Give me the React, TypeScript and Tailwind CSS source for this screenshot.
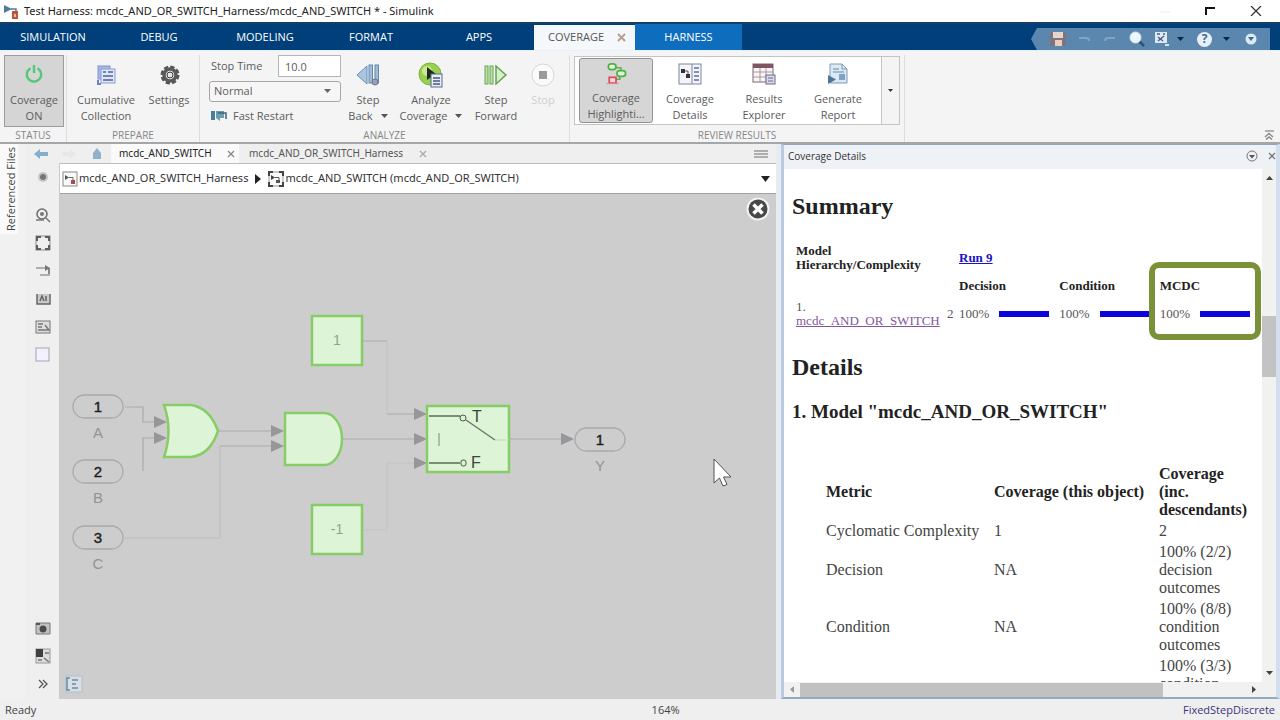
import type { ReactNode } from "react";

type Kids = { children?: ReactNode };

function Svg({ w, h, className, children }: { w: number; h: number; className?: string } & Kids) {
  return (
    <svg width={w} height={h} viewBox={`0 0 ${w} ${h}`} className={className} fill="none" aria-hidden="true">
      {children}
    </svg>
  );
}

function Caret() {
  return (
    <Svg w={7} h={4} className="inline-block shrink-0">
      <path d="M0 0H7L3.5 4Z" fill="#555" />
    </Svg>
  );
}

/* ---------- ribbon icons, all on a 26px grid ---------- */

const PowerIcon = () => (
  <Svg w={26} h={26}>
    <path d="M9.500 6.200A7.200 7.200 0 1 0 16.500 6.200" stroke="#55c878" strokeWidth="2.400" />
    <path d="M13 3V11" stroke="#55c878" strokeWidth="2.400" />
  </Svg>
);
const CumulativeIcon = () => (
  <Svg w={26} h={26}>
    <rect x="5" y="4" width="12" height="13" fill="#a9b9e6" stroke="#7f93cf" />
    <rect x="8" y="7" width="14" height="14" fill="#dfe6f8" stroke="#8b9bcf" />
    <path d="M10 10H13M15 10H20M10 14H20M10 18H20" stroke="#4f62a0" strokeWidth="1.500" />
    <path d="M5 18V22H8" stroke="#6b83c7" strokeWidth="2" />
  </Svg>
);
const GearIcon = () => (
  <Svg w={26} h={26}>
    <circle cx="14" cy="13" r="8" stroke="#555" strokeWidth="3" strokeDasharray="4.200 2.083" />
    <circle cx="14" cy="13" r="6" stroke="#5a5a5a" strokeWidth="3.500" />
    <circle cx="14" cy="13" r="3" fill="#e6e6e6" stroke="#333" />
  </Svg>
);
const StepBackIcon = () => (
  <Svg w={26} h={26}>
    <path d="M2 13L12 4V22Z" fill="#a8c6e0" stroke="#6a8fb5" />
    <rect x="14" y="3" width="3.500" height="18" fill="#9fbcda" stroke="#6787ab" />
    <rect x="20" y="3" width="3.500" height="18" fill="#9fbcda" stroke="#6787ab" />
    <circle cx="20" cy="20" r="3" fill="#9aa3b5" stroke="#69748c" />
  </Svg>
);
const AnalyzeIcon = () => (
  <Svg w={26} h={26}>
    <circle cx="12" cy="12" r="11" fill="#9ad04f" stroke="#7ab33a" />
    <circle cx="9" cy="9" r="5" fill="#c8ea93" />
    <path d="M9 5V18L18 12Z" fill="#1e2a1e" />
    <rect x="13" y="12" width="11" height="13" fill="#e9eef6" stroke="#566a8a" />
    <path d="M15 16H22M15 19H22M15 22H22" stroke="#445a80" strokeWidth="1.500" />
  </Svg>
);
const StepForwardIcon = () => (
  <Svg w={26} h={26}>
    <rect x="2" y="4" width="3" height="18" fill="#b9e3a4" stroke="#6aa553" />
    <rect x="7" y="4" width="3" height="18" fill="#b9e3a4" stroke="#6aa553" />
    <path d="M13 4V22L23 13Z" fill="#d5efc8" stroke="#5f9f49" strokeWidth="1.400" />
  </Svg>
);
const StopIcon = () => (
  <Svg w={26} h={26}>
    <circle cx="13" cy="13" r="11" fill="#fafafa" stroke="#d6d6d6" />
    <rect x="9" y="9" width="8" height="8" fill="#9b9b9b" />
  </Svg>
);
const HighlightIcon = () => (
  <Svg w={26} h={26}>
    <path d="M10 7H18V12M10 19H17V16" stroke="#5fae50" strokeWidth="1.500" />
    <rect x="5" y="3" width="8" height="6" rx="3" fill="#dff5d6" stroke="#4fb043" strokeWidth="1.800" />
    <rect x="14" y="10" width="9" height="6" rx="3" fill="#dff5d6" stroke="#4fb043" strokeWidth="1.800" />
    <rect x="6" y="17" width="7" height="6" fill="#fbdcdc" stroke="#dc4a55" strokeWidth="1.800" />
    <path d="M3 23.500H16" stroke="#e08a90" />
  </Svg>
);
const DetailsIcon = () => (
  <Svg w={26} h={26}>
    <rect x="2" y="3" width="22" height="20" fill="#f3f5fa" stroke="#7a85a0" />
    <path d="M15 3V23" stroke="#7a85a0" />
    <path d="M17 7H22M17 11H22M17 15H22M17 19H22" stroke="#5a6fa8" strokeWidth="1.500" />
    <rect x="4" y="8" width="4" height="4" fill="#333" />
    <rect x="9" y="13" width="4" height="4" fill="#333" />
    <path d="M8 10H11V13" stroke="#555" />
  </Svg>
);
const ResultsIcon = () => (
  <Svg w={26} h={26}>
    <rect x="2" y="3" width="20" height="18" fill="#f8f5f6" stroke="#7c6670" />
    <rect x="2" y="3" width="20" height="4" fill="#7d5565" />
    <path d="M2 11H22M2 16H22M9 7V21M15 7V21" stroke="#a898a2" />
    <rect x="15" y="14" width="9" height="9" fill="#d7d9e8" stroke="#686c8c" />
    <path d="M17 17H22M17 20H22" stroke="#686c8c" />
  </Svg>
);
const ReportIcon = () => (
  <Svg w={26} h={26}>
    <path d="M5 3H17L22 8V22H5Z" fill="#dce8f3" stroke="#7f9bb8" />
    <path d="M17 3V8H22" stroke="#7f9bb8" />
    <path d="M8 8H14M8 11H19" stroke="#8aa7c4" strokeWidth="1.500" />
    <rect x="14" y="13" width="6" height="6" fill="#7fa3c7" />
    <path d="M3 14L11 18.500L3 23Z" fill="#4d7595" />
  </Svg>
);

/* ---------- ribbon building blocks ---------- */

function Tool({ icon, lines, width, className = "", caret = false, ...rest }: {
  icon: ReactNode; lines: string[]; width: string; className?: string; caret?: boolean; disabled?: boolean; "aria-pressed"?: boolean;
}) {
  return (
    <button type="button" className={`flex flex-col items-center text-[11px] leading-4 whitespace-nowrap ${width} ${className}`} {...rest}>
      {icon}
      {lines.map((line, i) => (
        <span key={line} className={i === 0 ? "mt-1 block" : "flex items-center gap-2"}>
          {line}
          {caret && i === lines.length - 1 && <Caret />}
        </span>
      ))}
    </button>
  );
}

function Group({ label, className, children }: { label: string; className: string } & Kids) {
  return (
    <section aria-label={label} className={`flex shrink-0 flex-col border-r border-[#dedede] ${className}`}>
      <div className="flex flex-1 items-start">{children}</div>
      <div className="h-[14px] text-center text-[10px] leading-[14px] text-[#868686]">{label}</div>
    </section>
  );
}

function TitleBar() {
  return (
    <header className="flex h-[22px] shrink-0 items-center bg-white pr-[18px] font-['Noto_Sans',sans-serif] text-[11px] text-[#222]">
      <Svg w={20} h={18} className="mr-[2px] ml-[2px]">
        <path d="M2 3L10 7L2 11Z" fill="#4c7d9b" />
        <path d="M9 7H14V10" stroke="#557b91" strokeWidth="1.500" />
        <rect x="10" y="9" width="6" height="8" fill="#b9563d" />
        <rect x="12" y="12" width="2" height="3" fill="#e8b9a9" />
      </Svg>
      <h1 className="mr-auto whitespace-nowrap">Test Harness: mcdc_AND_OR_SWITCH_Harness/mcdc_AND_SWITCH * - Simulink</h1>
      <div className="flex items-center gap-[34px]">
        <button type="button" aria-label="Minimize">
          <Svg w={10} h={10}><path d="M0 6H10" stroke="#eeeeee" /></Svg>
        </button>
        <button type="button" aria-label="Restore">
          <Svg w={12} h={10}><path d="M2 9V2H11" stroke="#111" strokeWidth="2" /></Svg>
        </button>
        <button type="button" aria-label="Close">
          <Svg w={12} h={10}><path d="M1 0L11 10M11 0L1 10" stroke="#333" strokeWidth="1.300" /></Svg>
        </button>
      </div>
    </header>
  );
}

function QuickAccess() {
  return (
    <div className="mr-[10px] ml-auto flex h-[22px] items-center">
      <Svg w={6} h={22}><path d="M6 0L0 11L6 22Z" fill="#5b86ae" /></Svg>
      <div className="flex h-[22px] items-center bg-[#5b86ae] pr-[13px] pl-[12px]">
        <button type="button" aria-label="Save">
          <Svg w={18} h={16}>
            <rect x="1" y="1" width="16" height="14" rx="1" fill="#7d7480" />
            <rect x="4" y="1" width="10" height="6" fill="#e3d6cf" />
            <rect x="6" y="9" width="7" height="6" fill="#e9cdbd" />
          </Svg>
        </button>
        <button type="button" aria-label="Undo" className="ml-[10px]">
          <Svg w={14} h={14}><path d="M2 6H9Q12 6 12 9" stroke="#84a4c4" strokeWidth="2" /></Svg>
        </button>
        <button type="button" aria-label="Redo" className="ml-3">
          <Svg w={14} h={14}><path d="M12 6H5Q2 6 2 9" stroke="#84a4c4" strokeWidth="2" /></Svg>
        </button>
        <button type="button" aria-label="Search" className="ml-3">
          <Svg w={16} h={16}>
            <path d="M9 9L15 15" stroke="#2b517b" strokeWidth="2.500" />
            <circle cx="6.500" cy="6.500" r="5.500" fill="#eef6fd" stroke="#d4e4f2" />
          </Svg>
        </button>
        <button type="button" aria-label="Favorites" className="ml-[9px]">
          <Svg w={16} h={16}>
            <rect x="1" y="1" width="12" height="11" fill="#dfe8f2" />
            <path d="M3 3H6M9 3H11M4 6L9 10M10 5L4 10" stroke="#48668b" strokeWidth="1.500" />
            <path d="M11 14H15" stroke="#d6e0ea" strokeWidth="2" />
          </Svg>
        </button>
        <button type="button" aria-label="More favorites" className="ml-[7px]">
          <Svg w={7} h={4}><path d="M0 0H7L3.500 4Z" fill="#082745" /></Svg>
        </button>
        <button type="button" aria-label="Help" className="ml-[13px] flex size-[15px] items-center justify-center rounded-full bg-[#e6f0f6] text-[12px] leading-none font-bold text-[#3e6d92]">?</button>
        <button type="button" aria-label="More help" className="ml-[11px]">
          <Svg w={7} h={4}><path d="M0 0H7L3.500 4Z" fill="#082745" /></Svg>
        </button>
        <button type="button" aria-label="Minimize toolstrip" className="ml-[15px]">
          <Svg w={12} h={12}>
            <circle cx="6" cy="6" r="5.500" fill="#dceaf4" />
            <path d="M3 4H9L6 8Z" fill="#386a93" />
          </Svg>
        </button>
      </div>
    </div>
  );
}

function TabBar() {
  const tab = "flex h-full shrink-0 items-center justify-center";
  return (
    <nav aria-label="Toolstrip tabs" className="flex h-[28px] shrink-0 items-end border-t-2 border-[#173f63] bg-[#003f7a] text-[11px] text-white">
      <a href="#simulation" className={`w-[106px] ${tab}`}>SIMULATION</a>
      <a href="#debug" className={`w-[106px] ${tab}`}>DEBUG</a>
      <a href="#modeling" className={`w-[106px] ${tab}`}>MODELING</a>
      <a href="#format" className={`w-[106px] ${tab}`}>FORMAT</a>
      <a href="#apps" className={`w-[110px] ${tab}`}>APPS</a>
      <div className="flex h-[25px] w-[101px] shrink-0 items-center bg-[#f5f8fa] pl-[14px] text-[#555]">
        <a href="#coverage" aria-current="page">COVERAGE</a>
        <button type="button" aria-label="Close Coverage tab" className="ml-auto mr-[9px]">
          <Svg w={9} h={9}><path d="M1 1L8 8M8 1L1 8" stroke="#b89b90" strokeWidth="1.800" /></Svg>
        </button>
      </div>
      <a href="#harness" className={`w-[107px] bg-[#0f6dbe] ${tab}`}>HARNESS</a>
      <QuickAccess />
    </nav>
  );
}

function Ribbon() {
  return (
    <div className="flex h-[94px] shrink-0 border-t border-b-2 border-t-[#e0f3fc] border-b-[#a4a7aa] bg-[#f4f4f4] pt-1 text-[#5c5c5c]">
      <Group label="STATUS" className="w-[67px]">
        <Tool icon={<PowerIcon />} lines={["Coverage", "ON"]} width="w-[60px]" aria-pressed={true}
          className="ml-1 h-[72px] border border-[#9d9d9d] bg-[#d5d5d5] pt-[6px]" />
      </Group>
      <Group label="PREPARE" className="w-[133px]">
        <Tool icon={<CumulativeIcon />} lines={["Cumulative", "Collection"]} width="w-[78px]" className="pt-[7px]" />
        <Tool icon={<GearIcon />} lines={["Settings"]} width="w-[48px]" className="pt-[7px]" />
      </Group>
      <Group label="ANALYZE" className="w-[370px]">
        <div className="ml-[9px] w-[132px] text-[11px]">
          <div className="flex h-[22px] items-center justify-between">
            <label htmlFor="stop-time" className="ml-[2px] whitespace-nowrap">Stop Time</label>
            <input id="stop-time" defaultValue="10.0" className="h-[22px] w-[63px] border border-[#b5b5b5] bg-white px-[6px]" />
          </div>
          <div className="relative mt-[4px]">
            <select aria-label="Simulation mode" className="h-[21px] w-full appearance-none rounded-[3px] border border-[#a6a6a6] bg-[#f6f6f6] pl-1">
              <option>Normal</option>
            </select>
            <Svg w={7} h={4} className="pointer-events-none absolute top-[8px] right-[10px]"><path d="M0 0H7L3.500 4Z" fill="#666" /></Svg>
          </div>
          <button type="button" className="mt-[6px] flex h-4 items-center gap-[6px] whitespace-nowrap">
            <Svg w={16} h={12} className="ml-[2px]">
              <rect x="0" y="1" width="4" height="9" fill="#4a7f95" />
              <path d="M5 1H13V8H9V11L5 8Z" fill="#6c9cad" />
              <path d="M7 3H15V9" stroke="#38677c" strokeWidth="1.500" />
            </Svg>
            Fast Restart
          </button>
        </div>
        <Tool icon={<StepBackIcon />} lines={["Step", "Back"]} width="w-[54px]" caret className="pt-[7px]" />
        <Tool icon={<AnalyzeIcon />} lines={["Analyze", "Coverage"]} width="w-[72px]" caret className="pt-[7px]" />
        <Tool icon={<StepForwardIcon />} lines={["Step", "Forward"]} width="w-[58px]" className="pt-[7px]" />
        <Tool icon={<StopIcon />} lines={["Stop"]} width="w-[36px]" disabled className="pt-[7px] text-[#cfcfcf]" />
      </Group>
      <Group label="REVIEW RESULTS" className="w-[335px]">
        <div className="mt-px ml-1 flex h-[69px] border border-[#c4c4c4] bg-white">
          <Tool icon={<HighlightIcon />} lines={["Coverage", "Highlighti..."]} width="w-[74px]" aria-pressed={true}
            className="mt-px ml-1 h-[65px] rounded-[3px] border border-[#929292] bg-[#d6d6d6] pt-[2px]" />
          <Tool icon={<DetailsIcon />} lines={["Coverage", "Details"]} width="w-[74px]" className="pt-1" />
          <Tool icon={<ResultsIcon />} lines={["Results", "Explorer"]} width="w-[74px]" className="pt-1" />
          <Tool icon={<ReportIcon />} lines={["Generate", "Report"]} width="w-[74px]" className="pt-1" />
          <button type="button" aria-label="Show more" className="ml-[6px] flex w-[18px] items-center justify-center border-l border-[#c4c4c4] bg-[#f4f4f4]">
            <Svg w={5} h={3}><path d="M0 0H5L2.500 3Z" fill="#333" /></Svg>
          </button>
        </div>
      </Group>
      <button type="button" aria-label="Collapse toolstrip" className="mt-auto mr-[5px] mb-[2px] ml-auto">
        <Svg w={12} h={10}>
          <path d="M2 1H11" stroke="#999" strokeWidth="1.500" />
          <path d="M2 7L6 3.500L10 7M3 9.500L6 7L9 9.500" stroke="#888" strokeWidth="1.500" />
        </Svg>
      </button>
    </div>
  );
}

/* ---------- palette ---------- */

const paletteTop: { name: string; art: ReactNode }[] = [
  { name: "Zoom in", art: <><circle cx="7" cy="7" r="5" stroke="#6b6b6b" strokeWidth="1.500" /><circle cx="7" cy="7" r="2" fill="#777" /><path d="M11 11L15 15M1 13H9" stroke="#777" strokeWidth="1.500" /></> },
  { name: "Fit to view", art: <><rect x="1" y="1" width="14" height="14" stroke="#8a8a8a" /><path d="M2 6V2H6M10 2H14V6M14 10V14H10M6 14H2V10" stroke="#5e5e5e" strokeWidth="2" /></> },
  { name: "Signal names", art: <><path d="M1 5H11M5 12H15" stroke="#9a9a9a" strokeWidth="1.500" /><path d="M10 2L15 5L10 8Z" fill="#777" /><path d="M14 5V11" stroke="#666" strokeWidth="1.500" /></> },
  { name: "Annotation", art: <><path d="M2 3H14V13H2Z" fill="#c9c9c9" /><path d="M2 3V13H15V3M5 10L7 5L9 10M11 5V10" stroke="#666" strokeWidth="1.500" /></> },
  { name: "Image", art: <><rect x="1" y="2" width="14" height="12" fill="#dedede" stroke="#777" /><path d="M3 5H8M3 8H7M3 11H14L10 6" stroke="#777" strokeWidth="1.500" /></> },
  { name: "Area", art: <rect x="1" y="1" width="13" height="13" fill="#f2f2fc" stroke="#a4a3b8" /> },
];

function Palette() {
  return (
    <div className="flex w-[33px] shrink-0 flex-col items-center bg-[#efefef] pt-[6px] pb-[7px]">
      <button type="button" aria-label="Hide browser" className="mb-[22px]">
        <Svg w={16} h={16}><circle cx="8" cy="8" r="5" fill="#c6c6c6" /><circle cx="8" cy="8" r="3" fill="#777" /></Svg>
      </button>
      <div className="flex flex-col gap-3">
        {paletteTop.map((p) => (
          <button type="button" key={p.name} aria-label={p.name}><Svg w={16} h={16}>{p.art}</Svg></button>
        ))}
      </div>
      <div className="mt-auto flex flex-col gap-3">
        <button type="button" aria-label="Screenshot">
          <Svg w={16} h={16}>
            <path d="M1 3H15V14H1Z" fill="#c2c2c2" stroke="#777" /><circle cx="8" cy="9" r="3.500" fill="#4c4c4c" /><path d="M1 4H5" stroke="#555" strokeWidth="2" />
          </Svg>
        </button>
        <button type="button" aria-label="Model data">
          <Svg w={16} h={16}>
            <rect x="1" y="1" width="14" height="14" fill="#dcdcdc" stroke="#999" /><rect x="1" y="1" width="7" height="8" fill="#3f3f3f" /><path d="M10 5H14M3 12H7M9 10L14 14" stroke="#777" strokeWidth="1.500" />
          </Svg>
        </button>
        <button type="button" aria-label="More tools">
          <Svg w={16} h={16}><path d="M4 4L8 8L4 12M8 4L12 8L8 12" stroke="#555" strokeWidth="1.300" /></Svg>
        </button>
      </div>
    </div>
  );
}

/* ---------- block diagram ---------- */

function Port({ x, y, n, name }: { x: number; y: number; n: string; name: string }) {
  return (
    <g>
      <rect x={x} y={y} width="50" height="23" rx="11.500" stroke="#a9a9a9" strokeWidth="1.300" />
      <text x={x + 25} y={y + 17} textAnchor="middle" fontSize="15" fill="#1c1c1c" stroke="#1c1c1c" strokeWidth="0.400">{n}</text>
      <text x={x + 25} y={y + 43} textAnchor="middle" fontSize="15" fill="#939393">{name}</text>
    </g>
  );
}

const ARROWS = [[167, 422], [167, 438], [284, 431], [284, 446], [427, 414], [427, 439], [427, 463], [574, 439]];

function Diagram() {
  return (
    <svg width="715" height="504" viewBox="60 194 715 504" fill="none" role="img" aria-label="mcdc_AND_SWITCH block diagram" className="shrink-0" fontFamily="'Liberation Sans', Arial, sans-serif">
      <g stroke="#abaaad" strokeWidth="1.200">
        <path d="M125 407H143V422H158M143 471V438H158M219 431H274M220 446H274M343 439H416M362 341H387" />
        <path d="M387 414H416M510 439H564" />
        <path d="M125 538H220V446" stroke="#bebec1" />
        <path d="M387 341V414M362 530H387V463H416" stroke="#c4c4c7" />
      </g>
      {ARROWS.map(([x, y]) => (
        <path key={`${x}-${y}`} d={`M${x - 13} ${y - 6}L${x} ${y}L${x - 13} ${y + 6}Z`} fill="#98969a" />
      ))}
      <g fill="#def4d6" stroke="#86cd68" strokeWidth="2.500">
        <path d="M164 405H191Q210 408 218 431Q210 455 191 457H164Q173 431 164 405Z" />
        <path d="M285 413H324A18 26 0 0 1 324 465H285Z" />
        <rect x="312" y="316" width="50" height="49" />
        <rect x="312" y="505" width="50" height="49" />
        <rect x="427" y="406" width="82" height="66" />
      </g>
      <text x="337" y="345" textAnchor="middle" fontSize="14" fill="#8fa58b">1</text>
      <text x="337" y="534" textAnchor="middle" fontSize="14" fill="#8fa58b">-1</text>
      <path d="M429 416H460M429 463H460" stroke="#5c6b57" strokeWidth="1.500" />
      <circle cx="463" cy="418" r="3" stroke="#4d5a49" />
      <rect x="461" y="460" width="5" height="6" rx="2" stroke="#4d5a49" />
      <path d="M466 420L495 440" stroke="#66745f" strokeWidth="1.300" />
      <path d="M439 433V446" stroke="#93a08f" strokeWidth="1.300" />
      <path d="M495 440H509" stroke="#c4d8bd" />
      <text x="472" y="422" fontSize="16" fill="#3d463a">T</text>
      <text x="471" y="468" fontSize="16" fill="#3d463a">F</text>
      <Port x={73} y={395} n="1" name="A" />
      <Port x={73} y={460} n="2" name="B" />
      <Port x={73} y={526} n="3" name="C" />
      <Port x={575} y={428} n="1" name="Y" />
      <path d="M714 459V483L719.500 478L723 486L727 484.500L723.500 477H731Z" fill="#fff" stroke="#555" />
    </svg>
  );
}

function ModelIcon() {
  return (
    <Svg w={16} h={16} className="shrink-0">
      <rect x="1" y="1" width="14" height="14" fill="#fafafa" stroke="#888" />
      <path d="M3 4L7 6.500L3 9Z" fill="#555" />
      <path d="M7 6.500H11V9" stroke="#666" />
      <rect x="9" y="9" width="4" height="4" fill="#a44e4e" />
    </Svg>
  );
}

function ReferenceIcon() {
  return (
    <Svg w={16} h={16} className="shrink-0">
      <rect x="1" y="1" width="14" height="14" fill="#fafafa" stroke="#999" />
      <path d="M1 5V1H5M11 1H15V5M15 11V15H11M5 15H1V11" stroke="#444" strokeWidth="2" />
      <path d="M3 4L7 6.500L3 9Z" fill="#444" />
      <path d="M7 6.500H11V9" stroke="#555" />
      <rect x="8" y="9" width="4" height="3" fill="#555" />
    </Svg>
  );
}

const CloseX = ({ color }: { color: string }) => (
  <Svg w={8} h={8}><path d="M1 1L7 7M7 1L1 7" stroke={color} strokeWidth="1.300" /></Svg>
);

function Editor() {
  return (
    <main className="flex min-w-0 flex-1 flex-col font-['Noto_Sans',sans-serif]">
      <div className="flex h-[19px] shrink-0 items-center bg-[#efefef] text-[10px] text-[#555]">
        <button type="button" aria-label="Back" className="ml-2">
          <Svg w={14} h={12}><path d="M0 6L6 1V4H14V8H6V11Z" fill="#85aecb" /></Svg>
        </button>
        <button type="button" aria-label="Forward" disabled className="ml-[14px]">
          <Svg w={14} h={12}><path d="M14 6L8 1V4H0V8H8V11Z" fill="#e8e6e6" /></Svg>
        </button>
        <button type="button" aria-label="Up to parent" className="ml-[15px]">
          <Svg w={12} h={14}><path d="M6 1L10 6V12H2V6Z" fill="#8fb2c9" /></Svg>
        </button>
        <div className="ml-[8px] flex h-full w-[128px] items-center bg-[#fafafa] pl-[8px] text-[#222]">
          <a href="#mcdc-and-switch" className="whitespace-nowrap">mcdc_AND_SWITCH</a>
          <button type="button" aria-label="Close mcdc_AND_SWITCH" className="mr-1 ml-auto"><CloseX color="#888" /></button>
        </div>
        <div className="ml-[10px] flex w-[180px] items-center">
          <a href="#harness-model" className="whitespace-nowrap">mcdc_AND_OR_SWITCH_Harness</a>
          <button type="button" aria-label="Close mcdc_AND_OR_SWITCH_Harness" className="mr-[2px] ml-auto"><CloseX color="#aaa" /></button>
        </div>
        <button type="button" aria-label="Tab list" className="mr-2 ml-auto">
          <Svg w={14} h={8}><path d="M0 1H14M0 4H14M0 7H14" stroke="#999" strokeWidth="1.500" /></Svg>
        </button>
      </div>
      <div className="flex min-h-0 flex-1">
        <Palette />
        <div className="flex min-w-0 flex-1 flex-col border-l border-[#c9c9c9]">
          <div className="flex h-[31px] shrink-0 items-center border-t border-b border-t-[#bdbdbd] border-b-[#a3a3a3] bg-white pr-[6px] pl-[2px] text-[11px] whitespace-nowrap text-[#333]">
            <ModelIcon />
            <a href="#harness-model" className="ml-px">mcdc_AND_OR_SWITCH_Harness</a>
            <Svg w={6} h={10} className="mx-[7px] shrink-0"><path d="M0 0L6 5L0 10Z" fill="#222" /></Svg>
            <ReferenceIcon />
            <a href="#mcdc-and-switch" className="ml-px">mcdc_AND_SWITCH (mcdc_AND_OR_SWITCH)</a>
            <button type="button" aria-label="Browse path" className="ml-auto">
              <Svg w={9} h={6}><path d="M0 0H9L4.500 6Z" fill="#222" /></Svg>
            </button>
          </div>
          <div className="relative flex min-h-0 flex-1 overflow-hidden bg-[#cdcdcd]">
            <Diagram />
            <button type="button" aria-label="Exit coverage highlighting" className="absolute top-[3px] right-[6px]">
              <Svg w={24} h={24}>
                <circle cx="12" cy="12" r="11.500" fill="#f2f2f2" />
                <circle cx="12" cy="12" r="9.500" fill="#484848" />
                <path d="M7.500 7.500L16.500 16.500M16.500 7.500L7.500 16.500" stroke="#fff" strokeWidth="3.500" />
              </Svg>
            </button>
            <button type="button" aria-label="Show legend" className="absolute bottom-[6px] left-[5px]">
              <Svg w={18} h={18}>
                <rect x="1" y="1" width="16" height="16" fill="#d8dee4" stroke="#b4bec9" />
                <path d="M5 3H2V15H5M7 5H13M7 9H11M7 13H13" stroke="#628ea8" strokeWidth="1.500" />
              </Svg>
            </button>
          </div>
        </div>
      </div>
    </main>
  );
}

/* ---------- coverage details ---------- */

const details = [
  { metric: "Cyclomatic Complexity", own: "1", all: "2" },
  { metric: "Decision", own: "NA", all: "100% (2/2) decision outcomes" },
  { metric: "Condition", own: "NA", all: "100% (8/8) condition outcomes" },
  { metric: "", own: "", all: "100% (3/3) condition" },
];

const Full = () => (
  <td className="align-middle">
    <div className="flex items-center justify-between pr-[10px]">
      100%
      <span className="h-[6px] w-[50px] bg-[#0a05dc]" />
    </div>
  </td>
);

function Report() {
  return (
    <article className="relative min-w-0 flex-1 overflow-hidden bg-white pl-2 font-['Liberation_Serif','Times_New_Roman',serif] text-[#222]">
      <h2 className="mt-[22px] text-[24px] leading-[30px] font-bold">Summary</h2>
      <table className="mt-[23px] ml-1 w-[464px] table-fixed text-left text-[13px] leading-[14px]">
        <colgroup>
          <col className="w-[151px]" />
          <col className="w-[12px]" />
          <col />
          <col />
          <col />
        </colgroup>
        <thead>
          <tr className="h-[28px]">
            <th className="font-bold">Model Hierarchy/Complexity</th>
            <th />
            <th colSpan={3} className="font-bold"><a href="#run-9" className="text-[#1a12c8] underline">Run 9</a></th>
          </tr>
          <tr className="h-[28px]">
            <th />
            <th />
            <th className="font-bold">Decision</th>
            <th className="font-bold">Condition</th>
            <th className="font-bold">MCDC</th>
          </tr>
        </thead>
        <tbody className="text-[#555]">
          <tr className="h-[28px]">
            <td className="whitespace-nowrap">1.<br /><a href="#model-1" className="text-[#81569f] underline">mcdc_AND_OR_SWITCH</a></td>
            <td>2</td>
            <Full />
            <Full />
            <Full />
          </tr>
        </tbody>
      </table>
      <div className="pointer-events-none absolute top-[93px] right-px h-[78px] w-[112px] rounded-[10px] border-[6px] border-[#7b9138]" />
      <h2 className="mt-[24px] text-[24px] leading-[30px] font-bold">Details</h2>
      <h3 className="mt-[19px] text-[19px] leading-[22px] font-bold whitespace-nowrap">1. Model "mcdc_AND_OR_SWITCH"</h3>
      <table className="mt-[40px] ml-[34px] w-[428px] table-fixed text-left text-[16px] leading-[18px]">
        <colgroup>
          <col className="w-[168px]" />
          <col className="w-[165px]" />
          <col />
        </colgroup>
        <thead>
          <tr>
            <th className="pt-[2px] pb-px">Metric</th>
            <th className="pt-[2px] pb-px whitespace-nowrap">Coverage (this object)</th>
            <th className="pt-[2px] pb-px">Coverage (inc. descendants)</th>
          </tr>
        </thead>
        <tbody className="text-[#444]">
          {details.map((d) => (
            <tr key={d.all}>
              <td className="pt-[2px] pb-px whitespace-nowrap">{d.metric}</td>
              <td className="pt-[2px] pb-px">{d.own}</td>
              <td className="pt-[2px] pb-px">{d.all}</td>
            </tr>
          ))}
        </tbody>
      </table>
    </article>
  );
}

function CoveragePanel() {
  return (
    <aside className="flex w-[499px] shrink-0 flex-col border-t border-r-4 border-b-2 border-l-[3px] border-t-[#93a6bd] border-r-[#d3dfee] border-b-[#93a9c4] border-l-[#b9cbe2]">
      <div className="flex h-[24px] shrink-0 items-center bg-[#eef1f5] pb-[2px] pl-1 text-[10px] text-[#333]">
        <h2 className="mr-auto">Coverage Details</h2>
        <button type="button" aria-label="Panel options" className="mr-[10px]">
          <Svg w={12} h={12}><circle cx="6" cy="6" r="5" stroke="#777" /><path d="M3 5H9L6 8.500Z" fill="#555" /></Svg>
        </button>
        <button type="button" aria-label="Close panel"><Svg w={8} h={8}><path d="M1 1L7 7M7 1L1 7" stroke="#777" strokeWidth="1.300" /></Svg></button>
      </div>
      <div className="flex min-h-0 flex-1">
        <Report />
        <div className="flex w-[14px] shrink-0 flex-col items-center bg-[#f1f1ef] py-[7px]">
          <Svg w={7} h={4}><path d="M0 4H7L3.500 0Z" fill="#444" /></Svg>
          <div className="mt-[136px] h-[61px] w-full bg-[#c3c3c3]" />
          <Svg w={7} h={4} className="mt-auto"><path d="M0 0H7L3.500 4Z" fill="#444" /></Svg>
        </div>
      </div>
      <div className="flex h-[15px] shrink-0 items-center bg-[#f1f1f1] pr-[20px] pl-[6px]">
        <Svg w={4} h={7}><path d="M4 0V7L0 3.500Z" fill="#999" /></Svg>
        <div className="ml-[6px] h-[14px] w-[363px] bg-[#c1c1c1]" />
        <Svg w={4} h={7} className="ml-auto"><path d="M0 0V7L4 3.500Z" fill="#444" /></Svg>
      </div>
    </aside>
  );
}

export default function App() {
  return (
    <div className="flex h-screen flex-col overflow-hidden bg-[#efefef] font-['Open_Sans','Noto_Sans',sans-serif]">
      <TitleBar />
      <TabBar />
      <Ribbon />
      <div className="flex min-h-0 flex-1">
        <div className="w-[26px] shrink-0 bg-[#f1f1f1]">
          <button type="button" className="flex h-[90px] w-[18px] items-center justify-center bg-[#fafafa] pl-[4px] text-[11px] leading-4 whitespace-nowrap text-[#444] [writing-mode:sideways-lr]">Referenced Files</button>
        </div>
        <Editor />
        <div className="w-[5px] shrink-0 bg-[#e6ebf2]" />
        <CoveragePanel />
      </div>
      <footer className="relative flex h-[21px] shrink-0 items-center justify-between bg-[#efefef] px-[5px] pt-[2px] text-[11px] text-[#444]">
        <span>Ready</span>
        <span className="absolute left-[52%] -translate-x-1/2">164%</span>
        <a href="#solver" className="text-[#3b3478]">FixedStepDiscrete</a>
      </footer>
    </div>
  );
}
